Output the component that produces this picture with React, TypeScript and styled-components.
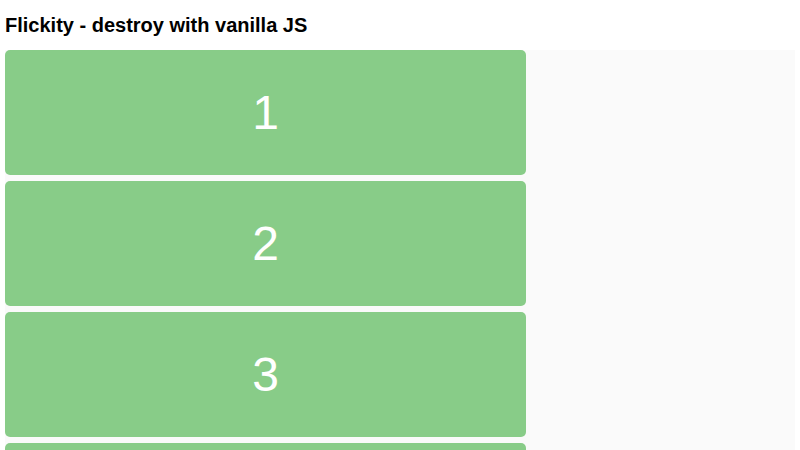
import React from 'react';
import styled, { createGlobalStyle } from 'styled-components';

const GlobalStyle = createGlobalStyle`
  body {
    margin: 0;
    background: white;
    font-family: "Liberation Sans", Arial, sans-serif;
  }
`;

const Page = styled.div`
  padding: 13px 5px 0;
`;

const Title = styled.h1`
  margin: 0 0 13px;
  font-size: 20px;
  line-height: 24px;
  font-weight: bold;
  color: #000;
`;

const Gallery = styled.div`
  background: #fafafa;
`;

const Cell = styled.div`
  width: 66%;
  height: 125px;
  margin-bottom: 6px;
  background: #8c8;
  border-radius: 5px;
  display: flex;
  align-items: center;
  justify-content: center;
  color: white;
  font-size: 48px;
`;

const cells = [1, 2, 3, 4, 5];

const App = () => {
  return (
    <>
      <GlobalStyle />
      <Page>
        <Title>Flickity - destroy with vanilla JS</Title>
        <Gallery>
          {cells.map((n) => (
            <Cell key={n}>{n}</Cell>
          ))}
        </Gallery>
      </Page>
    </>
  );
};

export default App;
